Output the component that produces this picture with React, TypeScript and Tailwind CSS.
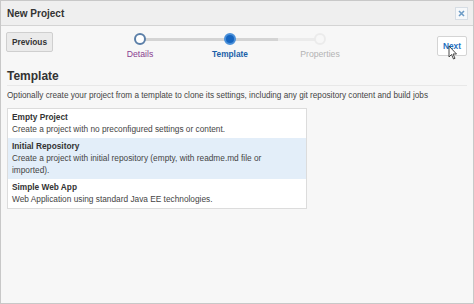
import React, { useState } from "react";

const templates = [
  { name: "Empty Project", desc: "Create a project with no preconfigured settings or content." },
  {
    name: "Initial Repository",
    desc: "Create a project with initial repository (empty, with readme.md file or imported).",
  },
  { name: "Simple Web App", desc: "Web Application using standard Java EE technologies." },
];

const App: React.FC = () => {
  const [selected, setSelected] = useState(1);

  return (
    <div
      className="w-[474px] h-[304px] bg-[#f7f7f7] border border-[#c8c8c8] flex flex-col text-[#333]"
      style={{ fontFamily: '"Liberation Sans", Arial, sans-serif' }}
    >
      {/* Title bar */}
      <div className="h-[25px] shrink-0 bg-[#efefef] border-b border-[#d4d4d4] flex items-center justify-between pl-[6px] pr-[5px]">
        <h1 className="text-[10px] font-bold text-[#333]">New Project</h1>
        <button className="w-[13px] h-[13px] border border-[#d6dde4] bg-[#f6f8fa] flex items-center justify-center">
          <svg width="7" height="7" viewBox="0 0 7 7">
            <path d="M1 1L6 6M6 1L1 6" stroke="#6e9cc6" strokeWidth="1.6" />
          </svg>
        </button>
      </div>

      {/* Wizard nav */}
      <div className="flex items-start px-[5px] pt-[6px] h-[43px] shrink-0">
        <button className="w-[47px] h-[20px] bg-[#ebebeb] border border-[#cfcfcf] rounded-[2px] text-[8.3px] font-bold text-[#333]">
          Previous
        </button>

        {/* Stepper */}
        <div className="relative ml-[42px] mt-[1px]">
          <div className="absolute left-[45px] top-[5px] w-[180px] h-[3px] bg-[#d4d4d4]" />
          <div className="absolute left-[183px] top-[5px] w-[42px] h-[3px] bg-[#ebebeb]" />
          <div className="grid grid-cols-[90px_90px_90px] relative">
            <div className="flex flex-col items-center gap-[4px]">
              <div className="w-[12px] h-[12px] rounded-full bg-white border-2 border-[#5b7fa8]" />
              <span className="text-[8.7px] leading-[11px] text-[#8a3d90]">Details</span>
            </div>
            <div className="flex flex-col items-center gap-[4px]">
              <div className="w-[12px] h-[12px] rounded-full bg-[#1565c0] border-2 border-[#4a90d9]" />
              <span className="text-[8.3px] leading-[11px] font-bold text-[#1a5fa8]">Template</span>
            </div>
            <div className="flex flex-col items-center gap-[4px]">
              <div className="w-[12px] h-[12px] rounded-full bg-[#f7f7f7] border-2 border-[#ebebeb]" />
              <span className="text-[8.7px] leading-[11px] text-[#b3b3b3]">Properties</span>
            </div>
          </div>
        </div>

        <div className="relative ml-auto mr-[1px]">
          <button className="w-[30px] h-[20px] bg-white border border-[#d4d4d4] rounded-[2px] text-[8.3px] font-bold text-[#1e6fc0]">
            Next
          </button>
          <svg className="absolute left-[11px] top-[13px]" width="10" height="15" viewBox="0 0 10 15">
            <path d="M1 1V12L3.5 9.5L5.5 14L7 13.3L5 9H8.5Z" fill="white" stroke="#333" strokeWidth="0.9" strokeLinejoin="round" />
          </svg>
        </div>
      </div>

      {/* Content */}
      <div className="px-[6px]">
        <h2 className="text-[12px] font-bold text-[#333] leading-[15px] border-b border-[#e8e8e8] pb-[1px]">Template</h2>
        <p className="text-[8.2px] text-[#444] mt-[4px] leading-[12px]">
          Optionally create your project from a template to clone its settings, including any git repository content and
          build jobs
        </p>

        <div className="mt-[6px] w-[300px] bg-white border border-[#dcdcdc]">
          {templates.map((t, i) => (
            <div
              key={t.name}
              onClick={() => setSelected(i)}
              className={`pl-[4px] pr-[12px] pt-[2px] pb-[3px] cursor-pointer ${
                i === selected ? "bg-[#e3eef9]" : "bg-white"
              }`}
            >
              <div className="text-[8.3px] font-bold text-[#333] leading-[12px]">{t.name}</div>
              <div className="text-[8.3px] text-[#444] leading-[12px]">{t.desc}</div>
            </div>
          ))}
        </div>
      </div>
    </div>
  );
};

export default App;
